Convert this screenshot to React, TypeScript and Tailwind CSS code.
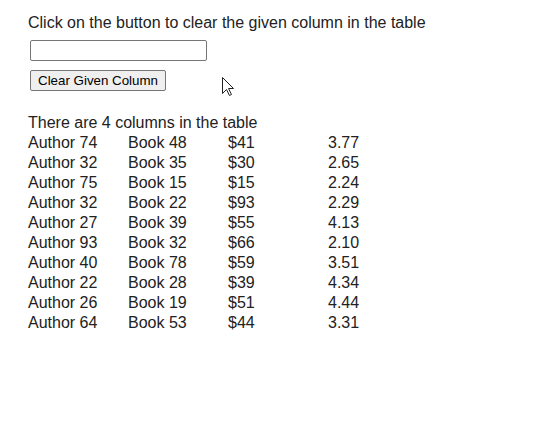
import React from "react";

const rows: [string, string, string, string][] = [
  ["Author 74", "Book 48", "$41", "3.77"],
  ["Author 32", "Book 35", "$30", "2.65"],
  ["Author 75", "Book 15", "$15", "2.24"],
  ["Author 32", "Book 22", "$93", "2.29"],
  ["Author 27", "Book 39", "$55", "4.13"],
  ["Author 93", "Book 32", "$66", "2.10"],
  ["Author 40", "Book 78", "$59", "3.51"],
  ["Author 22", "Book 28", "$39", "4.34"],
  ["Author 26", "Book 19", "$51", "4.44"],
  ["Author 64", "Book 53", "$44", "3.31"],
];

export default function App() {
  return (
    <div className="relative w-[557px] h-[424px] bg-white text-[#222] text-[16px] leading-[18px] pl-[28px] pt-[14px]" style={{ fontFamily: '"Liberation Sans", Arial, sans-serif' }}>
      <div className="h-[18px]">Click on the button to clear the given column in the table</div>
      <div className="mt-[8px] pl-[2px]">
        <input
          type="text"
          className="block w-[177px] h-[21px] border border-[#767676] rounded-[2px] bg-white outline-none"
        />
      </div>
      <div className="mt-[9px] pl-[2px]">
        <button className="block w-[136px] h-[21px] border border-[#767676] rounded-[2px] bg-[#efefef] text-[13.33px] leading-[15px] text-black">
          Clear Given Column
        </button>
      </div>
      <div className="mt-[23px] h-[20px]">There are 4 columns in the table</div>
      <div className="grid grid-cols-[100px_100px_100px_100px]">
        {rows.map((r, i) => (
          <React.Fragment key={i}>
            {r.map((c, j) => (
              <div key={j} className="h-[20px]">{c}</div>
            ))}
          </React.Fragment>
        ))}
      </div>
      <svg className="absolute left-[222px] top-[77px]" width="13" height="20" viewBox="0 0 13 20">
        <path
          d="M0.5 0.5 L0.5 16.5 L4.5 12.5 L7.5 18.5 L9.5 17.5 L6.5 11.5 L11.5 11.5 Z"
          fill="white"
          stroke="#222"
          strokeWidth="1"
          strokeLinejoin="miter"
        />
      </svg>
    </div>
  );
}
